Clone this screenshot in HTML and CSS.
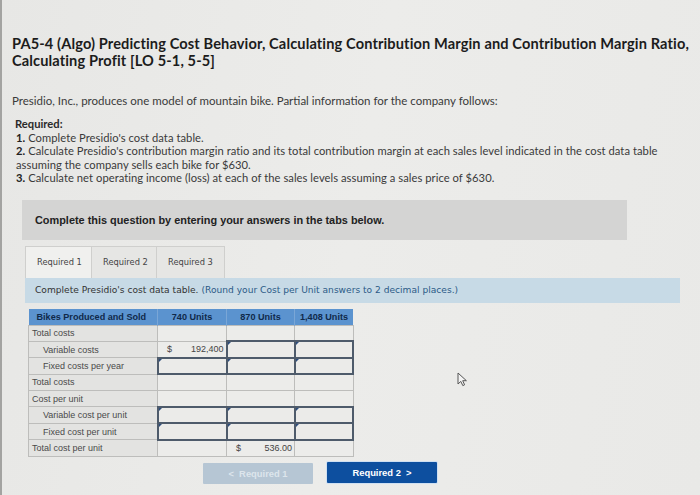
FILE: index.html
```html
<!DOCTYPE html>
<html lang="en">
<head>
<meta charset="utf-8">
<title>PA5-4 (Algo)</title>
<link rel="stylesheet" href="styles.css">
</head>
<body>
<div class="page">
  <h1 class="title">PA5-4 (Algo) Predicting Cost Behavior, Calculating Contribution Margin and Contribution Margin Ratio,<br>Calculating Profit [LO 5-1, 5-5]</h1>
  <p class="intro">Presidio, Inc., produces one model of mountain bike. Partial information for the company follows:</p>
  <div class="required">
    <div class="req-head">Required:</div>
    <div class="req-item"><b>1.</b> Complete Presidio's cost data table.</div>
    <div class="req-item"><b>2.</b> <span>Calculate Presidio's contribution margin ratio and its total contribution margin at each sales level indicated in the cost data table</span></div>
    <div class="req-item">assuming the company sells each bike for $630.</div>
    <div class="req-item"><b>3.</b> Calculate net operating income (loss) at each of the sales levels assuming a sales price of $630.</div>
  </div>

  <div class="banner">Complete this question by entering your answers in the tabs below.</div>

  <div class="tabs">
    <div class="tab active">Required 1</div>
    <div class="tab">Required 2</div>
    <div class="tab">Required 3</div>
  </div>

  <div class="instr">Complete Presidio's cost data table. <span class="note">(Round your Cost per Unit answers to 2 decimal places.)</span></div>

  <table class="cost">
    <thead>
      <tr>
        <th class="lbl">Bikes Produced and Sold</th>
        <th>740 Units</th>
        <th>870 Units</th>
        <th>1,408 Units</th>
      </tr>
    </thead>
    <tbody>
      <tr><td class="lbl">Total costs</td><td></td><td></td><td></td></tr>
      <tr><td class="lbl ind">Variable costs</td><td class="val"><span>$</span><span>192,400</span></td><td class="in"></td><td class="in"></td></tr>
      <tr><td class="lbl ind">Fixed costs per year</td><td class="in"></td><td class="in"></td><td class="in"></td></tr>
      <tr><td class="lbl">Total costs</td><td></td><td></td><td></td></tr>
      <tr><td class="lbl">Cost per unit</td><td></td><td></td><td></td></tr>
      <tr><td class="lbl ind">Variable cost per unit</td><td class="in"></td><td class="in"></td><td class="in"></td></tr>
      <tr><td class="lbl ind">Fixed cost per unit</td><td class="in"></td><td class="in"></td><td class="in"></td></tr>
      <tr><td class="lbl">Total cost per unit</td><td></td><td class="val"><span>$</span><span>536.00</span></td><td></td></tr>
    </tbody>
  </table>

  <div class="nav">
    <div class="btn prev">&lt;&nbsp; Required 1</div>
    <div class="btn next">Required 2 &nbsp;&gt;</div>
  </div>
</div>
<svg class="cursor" width="11" height="15" viewBox="0 0 11 15"><path d="M1 1 L1 12 L3.8 9.4 L5.8 13.6 L7.6 12.8 L5.7 8.7 L9.4 8.7 Z" fill="#f4f4f4" stroke="#555" stroke-width="1" stroke-linejoin="round"/></svg>
</body>
</html>
```

FILE: styles.css
```css
html, body {
  margin: 0;
  padding: 0;
}
body {
  width: 700px;
  height: 495px;
  overflow: hidden;
  background: linear-gradient(100deg, #e7e7e5 0%, #ececea 50%, #e9e9e7 100%);
  border-left: 2px solid #a3a3a1;
  box-sizing: border-box;
  position: relative;
  font-family: Lato, "Liberation Sans", sans-serif;
  color: #333;
}
.page {
  padding: 35px 0 0 10px;
}
.title {
  margin: 0;
  font-family: Lato, "Liberation Sans", sans-serif;
  font-weight: 700;
  font-size: 14.6px;
  line-height: 17px;
  color: #1c1c1c;
  letter-spacing: 0.12px;
}
.intro {
  margin: 25px 0 0 0;
  font-size: 11.5px;
  line-height: 13px;
  color: #3a3a3a;
}
.required {
  margin: 10px 0 0 3px;
  font-size: 11.2px;
  line-height: 13.5px;
  color: #3a3a3a;
}
.req-head {
  font-weight: 700;
  color: #2a2a2a;
}
.req-item {
  padding-left: 1px;
  white-space: nowrap;
  letter-spacing: 0.05px;
}
.req-item b {
  color: #222;
}
.banner {
  margin: 15px 0 0 10px;
  width: 605px;
  height: 40px;
  box-sizing: border-box;
  padding: 0 0 0 13px;
  display: flex;
  align-items: center;
  background: #d4d4d3;
  font-family: "Liberation Sans", Arial, sans-serif;
  font-weight: 700;
  font-size: 10.9px;
  color: #222;
}
.tabs {
  margin: 6px 0 0 13px;
  display: flex;
  height: 32px;
}
.tab {
  box-sizing: border-box;
  height: 32px;
  border: 1px solid #cfcfcd;
  border-bottom: none;
  background: #e6e6e4;
  font-family: "DejaVu Sans", sans-serif;
  font-size: 8.3px;
  color: #444;
  display: flex;
  align-items: center;
  padding-left: 11px;
}
.tab:nth-child(1) { width: 67px; }
.tab:nth-child(2) { width: 65px; border-left: none; }
.tab:nth-child(3) { width: 68px; border-left: none; }
.tab.active {
  background: #f0f0ee;
}
.instr {
  margin: 0 0 0 13px;
  width: 655px;
  height: 25px;
  box-sizing: border-box;
  padding-left: 10px;
  display: flex;
  align-items: center;
  background: #c7dae6;
  font-family: "DejaVu Sans", sans-serif;
  font-size: 9.1px;
  color: #333;
}
.instr .note {
  color: #2c5a86;
  margin-left: 3px;
}
.cost {
  margin: 6px 0 0 16px;
  border-collapse: collapse;
  font-family: "Liberation Sans", Arial, sans-serif;
  font-size: 9px;
  color: #444;
}
.cost th {
  height: 16px;
  padding: 0;
  background: #5b93cf;
  color: #10294a;
  font-weight: 700;
  font-size: 9.1px;
  text-align: center;
  border-left: 1px solid #7aa6d6;
}
.cost th.lbl {
  width: 129px;
  text-align: left;
  padding-left: 8px;
  box-sizing: border-box;
  border-left: none;
}
.cost th:nth-child(2) { width: 68px; }
.cost th:nth-child(3) { width: 67px; }
.cost th:nth-child(4) { width: 58px; }
.cost td {
  height: 16.4px;
  padding: 0;
  box-sizing: border-box;
  border: 1px solid #bdbdbb;
  background: #ececea;
  position: relative;
}
.cost td.lbl {
  background: #e3e3e1;
  padding-left: 3px;
  color: #4a4a4a;
}
.cost td.lbl.ind {
  padding-left: 14px;
}
.cost td.in {
  border: 2px solid #4e5b6b;
  background: #ebebe9;
}
.cost td.in::before {
  content: "";
  position: absolute;
  left: 0;
  top: 0;
  border-top: 3px solid #2d4d7c;
  border-right: 3px solid transparent;
}
.cost td.val {
  padding: 0 2px 0 9px;
}
.cost td.val span:first-child {
  float: left;
}
.cost td.val span:last-child {
  float: right;
}
.nav {
  margin: 5px 0 0 191px;
  display: flex;
  gap: 14px;
}
.btn {
  width: 110px;
  height: 21px;
  display: flex;
  align-items: center;
  justify-content: center;
  font-family: "Liberation Sans", Arial, sans-serif;
  font-size: 9.4px;
  font-weight: 700;
  border-radius: 1px;
}
.btn.prev {
  background: #b6c6d4;
  color: #dde5ec;
  margin-top: 1px;
}
.btn.next {
  background: #0d4f9f;
  color: #ffffff;
  box-shadow: 0 0 0 1px #cfe0f2;
}
.cursor {
  position: absolute;
  left: 455px;
  top: 372px;
}
```
